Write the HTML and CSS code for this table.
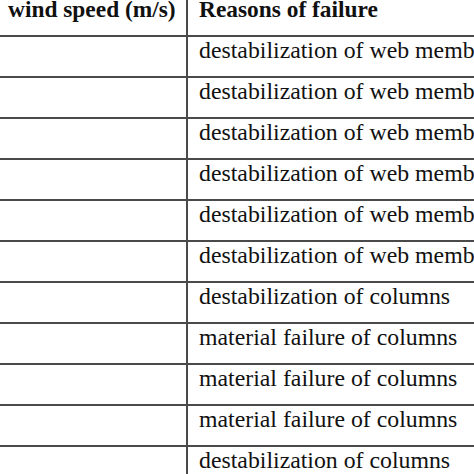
FILE: index.html
```html
<!DOCTYPE html>
<html>
<head>
<meta charset="utf-8">
<link rel="stylesheet" href="styles.css">
</head>
<body>
<div class="table">
  <div class="row head">
    <div class="cell c1">wind speed (m/s)</div>
    <div class="cell c2">Reasons of failure</div>
  </div>
  <div class="row"><div class="cell c1"></div><div class="cell c2">destabilization of web members</div></div>
  <div class="row"><div class="cell c1"></div><div class="cell c2">destabilization of web members</div></div>
  <div class="row"><div class="cell c1"></div><div class="cell c2">destabilization of web members</div></div>
  <div class="row"><div class="cell c1"></div><div class="cell c2">destabilization of web members</div></div>
  <div class="row"><div class="cell c1"></div><div class="cell c2">destabilization of web members</div></div>
  <div class="row"><div class="cell c1"></div><div class="cell c2">destabilization of web members</div></div>
  <div class="row"><div class="cell c1"></div><div class="cell c2">destabilization of columns</div></div>
  <div class="row"><div class="cell c1"></div><div class="cell c2">material failure of columns</div></div>
  <div class="row"><div class="cell c1"></div><div class="cell c2">material failure of columns</div></div>
  <div class="row"><div class="cell c1"></div><div class="cell c2">material failure of columns</div></div>
  <div class="row"><div class="cell c1"></div><div class="cell c2">destabilization of columns</div></div>
</div>
</body>
</html>
```
FILE: styles.css
```css
html, body {
  margin: 0;
  padding: 0;
  background: #fff;
  overflow: hidden;
}
body {
  width: 474px;
  height: 474px;
}
.table {
  width: 620px;
  font-family: "Liberation Serif", "Times New Roman", serif;
  font-size: 23.8px;
  color: #111;
}
.row {
  display: grid;
  grid-template-columns: 188px 1fr;
  height: 41.1px;
  box-sizing: border-box;
  border-top: 2px solid #4a4a4a;
}
.row.head {
  height: 34.5px;
  border-top: none;
  font-weight: bold;
  font-size: 23.4px;
}
.cell {
  line-height: 24px;
  padding-top: 1px;
  white-space: nowrap;
}
.head .cell {
  padding-top: 0;
  line-height: 18px;
}
.c1 {
  border-right: 2px solid #4a4a4a;
  padding-left: 8px;
}
.c2 {
  padding-left: 11px;
}
```
